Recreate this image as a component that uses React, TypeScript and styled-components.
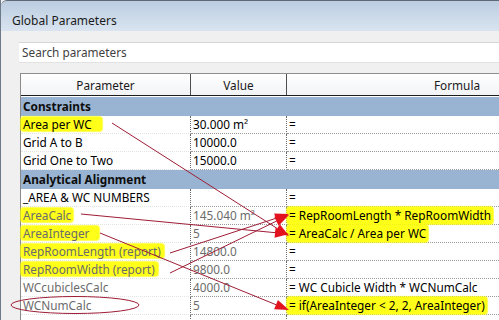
import React from 'react';
import styled, { createGlobalStyle } from 'styled-components';

const GlobalStyle = createGlobalStyle`
  html, body { margin: 0; padding: 0; background: #f0f0f0; overflow: hidden; }
  body { font-family: "Noto Sans", "Open Sans", Arial, sans-serif; }
`;

const Window = styled.div`
  position: relative;
  width: 499px;
  height: 320px;
  overflow: hidden;
  box-sizing: border-box;
  background: #f0f0f0;
  border-left: 1px solid #6f7a88;
  font-size: 11.8px;
  color: #000;
`;

const TitleBar = styled.div`
  height: 31px;
  box-sizing: border-box;
  padding: 11px 0 0 11px;
  line-height: 17px;
  font-size: 12px;
  color: #1b1b1b;
  border-top: 1px solid #5e6876;
  border-top-left-radius: 6px;
  background: linear-gradient(#bccde1, #d9e4f0);
`;

const Body = styled.div`
  padding: 11px 0 0 18px;
`;

const SearchWrap = styled.div`
  border-top: 1px solid #d6d6d6;
  border-bottom: 1px solid #e2e2e2;
`;

const SearchBox = styled.div`
  height: 19px;
  line-height: 19px;
  padding-left: 3px;
  background: #fff;
  color: #3f3f3f;
  white-space: nowrap;
`;

const Table = styled.div`
  margin: 10px 0 0 1px;
  width: 620px;
  border-left: 1px solid #8a8a8a;
  background: #fff;
`;

const Grid = styled.div`
  display: grid;
  grid-template-columns: 170px 96px 340px;
`;

const HeaderRow = styled(Grid)`
  height: 23px;
  box-sizing: border-box;
  border-top: 1px solid #8e8e8e;
  border-bottom: 1px solid #1c1c1c;
  background: linear-gradient(#ffffff, #f2f3f5);
  margin-bottom: 1px;
`;

const HeaderCell = styled.div`
  display: flex;
  align-items: center;
  justify-content: center;
  border-right: 1px solid #4e4e4e;
  color: #1a1a1a;
  &:last-child { border-right: none; }
`;

const GroupRow = styled.div`
  height: 19px;
  line-height: 19px;
  padding-left: 2px;
  background: #99b4d2;
  font-weight: bold;
  color: #0d0d0d;
  white-space: nowrap;
`;

const Row = styled(Grid)`
  height: 18px;
`;

const Cell = styled.div<{ $muted?: boolean; $first?: boolean; $last?: boolean }>`
  box-sizing: border-box;
  height: 18px;
  line-height: 17px;
  padding-left: 2px;
  white-space: nowrap;
  overflow: visible;
  color: ${p => (p.$muted ? '#6b6b6b' : '#000')};
  border-bottom: 1px dotted ${p => (p.$first ? '#e4e4e4' : '#9a9a9a')};
  border-right: ${p => (p.$last ? 'none' : '1px dotted #6a6a6a')};
`;

const Mark = styled.span<{ $pad: number; $tall?: boolean }>`
  display: inline-block;
  height: ${p => (p.$tall ? 17 : 14)}px;
  line-height: ${p => (p.$tall ? 17 : 14)}px;
  margin-top: ${p => (p.$tall ? 0 : 1)}px;
  margin-left: -2px;
  padding: 0 ${p => p.$pad}px 0 2px;
  background: #ffff1a;
  border-radius: 3px;
  box-shadow: 0 0 1px 1px rgba(255, 255, 0, 0.7);
`;

const Overlay = styled.svg`
  position: absolute;
  top: 0;
  left: -1px;
  width: 499px;
  height: 320px;
  pointer-events: none;
`;

type Param = {
  name: string;
  value: string;
  formula: string;
  muted?: boolean;
  markName?: number;
  markFormula?: number;
};

const constraints: Param[] = [
  { name: 'Area per WC', value: '30.000 m²', formula: '=', markName: 10 },
  { name: 'Grid A to B', value: '10000.0', formula: '=' },
  { name: 'Grid One to Two', value: '15000.0', formula: '=' },
];

const alignment: Param[] = [
  { name: '_AREA & WC NUMBERS', value: '', formula: '=' },
  { name: 'AreaCalc', value: '145.040 m²', formula: '= RepRoomLength * RepRoomWidth', muted: true, markName: 2, markFormula: 2 },
  { name: 'AreaInteger', value: '5', formula: '= AreaCalc / Area per WC', muted: true, markName: 10, markFormula: 2 },
  { name: 'RepRoomLength (report)', value: '14800.0', formula: '=', muted: true, markName: 3 },
  { name: 'RepRoomWidth (report)', value: '9800.0', formula: '=', muted: true, markName: 3 },
  { name: 'WCcubiclesCalc', value: '4000.0', formula: '= WC Cubicle Width * WCNumCalc', muted: true },
  { name: 'WCNumCalc', value: '5', formula: '= if(AreaInteger < 2, 2, AreaInteger)', muted: true, markFormula: 2 },
  { name: '', value: '', formula: '' },
];

function ParamRow({ p }: { p: Param }) {
  return (
    <Row>
      <Cell $muted={p.muted} $first>
        {p.markName !== undefined ? <Mark $pad={p.markName}>{p.name}</Mark> : p.name}
      </Cell>
      <Cell $muted={p.muted}>{p.value}</Cell>
      <Cell $last>
        {p.markFormula !== undefined ? <Mark $pad={p.markFormula} $tall>{p.formula}</Mark> : p.formula}
      </Cell>
    </Row>
  );
}

// arrow from (x1,y1) to tip (x2,y2)
function Arrow({ x1, y1, x2, y2 }: { x1: number; y1: number; x2: number; y2: number }) {
  const dx = x2 - x1;
  const dy = y2 - y1;
  const len = Math.hypot(dx, dy);
  const ux = dx / len;
  const uy = dy / len;
  const L = 14;
  const W = 5;
  const bx = x2 - ux * L;
  const by = y2 - uy * L;
  const pts = `${x2},${y2} ${bx - uy * W},${by + ux * W} ${bx + uy * W},${by - ux * W}`;
  return (
    <g>
      <line x1={x1} y1={y1} x2={bx} y2={by} stroke="#9e1d35" strokeWidth={1} />
      <polygon points={pts} fill="#e3121f" />
    </g>
  );
}

export default function App() {
  return (
    <Window>
      <GlobalStyle />
      <TitleBar>Global Parameters</TitleBar>
      <Body>
        <SearchWrap>
          <SearchBox>Search parameters</SearchBox>
        </SearchWrap>
        <Table>
          <HeaderRow>
            <HeaderCell>Parameter</HeaderCell>
            <HeaderCell>Value</HeaderCell>
            <HeaderCell>Formula</HeaderCell>
          </HeaderRow>
          <GroupRow>Constraints</GroupRow>
          {constraints.map(p => <ParamRow key={p.name} p={p} />)}
          <GroupRow>Analytical Alignment</GroupRow>
          {alignment.map((p, i) => <ParamRow key={i} p={p} />)}
        </Table>
      </Body>
      <Overlay viewBox="0 0 499 320">
        <Arrow x1={112} y1={123} x2={289} y2={236} />
        <Arrow x1={81} y1={214} x2={289} y2={234} />
        <Arrow x1={170} y1={253} x2={289} y2={214} />
        <Arrow x1={170} y1={273} x2={289} y2={215} />
        <Arrow x1={100} y1={233} x2={289} y2={310} />
        <ellipse cx={75} cy={305} rx={64} ry={8.5} fill="none" stroke="#9e1d35" strokeWidth={1} />
      </Overlay>
    </Window>
  );
}
